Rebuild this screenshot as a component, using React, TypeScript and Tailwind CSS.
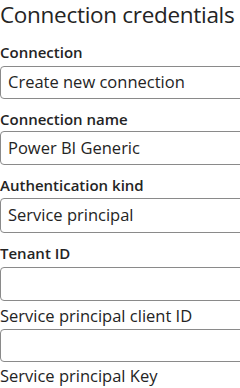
const fields = [
  { label: "Connection", value: "Create new connection", mt: "mt-[12px]", gap: "mt-[4px]", h: "h-[33px]", bold: true },
  { label: "Connection name", value: "Power BI Generic", mt: "mt-[10px]", gap: "mt-[2px]", h: "h-[34px]", bold: true },
  { label: "Authentication kind", value: "Service principal", mt: "mt-[10px]", gap: "mt-[3px]", h: "h-[35px]", bold: true },
  { label: "Tenant ID", value: "", mt: "mt-[10px]", gap: "mt-[4px]", h: "h-[34px]", bold: true },
  { label: "Service principal client ID", value: "", mt: "mt-[5px]", gap: "mt-[3px]", h: "h-[33px]", bold: false },
  { label: "Service principal Key", value: "", mt: "mt-[4px]", gap: "mt-[3px]", h: "h-[34px]", bold: false },
];

export default function App() {
  return (
    <div
      className="h-[388px] w-[240px] overflow-hidden bg-white text-[#242424]"
      style={{ fontFamily: '"Open Sans", "Noto Sans", sans-serif' }}
    >
      <h1 className="w-fit whitespace-nowrap text-[22.5px] font-normal leading-[30px] tracking-[-0.3px]">
        Connection credentials
      </h1>

      {fields.map((f) => (
        <div key={f.label} className={f.mt}>
          <label
            className={`block whitespace-nowrap leading-[20px] ${
              f.bold ? "text-[15px] font-semibold" : "text-[16.5px] font-normal"
            }`}
          >
            {f.label}
          </label>
          <div
            className={`${f.gap} ${f.h} -mr-[10px] flex items-center whitespace-nowrap rounded-[4px] border border-[#8a8a8a] px-[7px] text-[16.5px]`}
          >
            {f.value}
          </div>
        </div>
      ))}
    </div>
  );
}
